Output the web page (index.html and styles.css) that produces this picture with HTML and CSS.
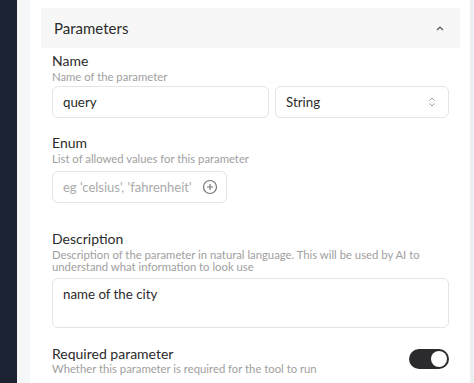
FILE: index.html
```html
<!DOCTYPE html>
<html lang="en">
<head>
  <meta charset="UTF-8">
  <title>Tool parameters</title>
  <link rel="stylesheet" href="styles.css">
</head>
<body>
  <div class="layout">
    <aside class="sidebar"></aside>
    <div class="gutter"></div>
    <main class="panel">
      <section class="params">
        <div class="params-head">
          <span class="params-title">Parameters</span>
          <svg class="chev" width="8" height="5" viewBox="0 0 8 5"><path d="M1 4 L4 1 L7 4" fill="none" stroke="#555" stroke-width="1.2"/></svg>
        </div>

        <div class="field name-field">
          <div class="label">Name</div>
          <div class="hint">Name of the parameter</div>
          <div class="row">
            <div class="input name-input">query</div>
            <div class="input select">
              <span>String</span>
              <svg width="8" height="12" viewBox="0 0 8 12"><path d="M1.5 4.5 L4 2 L6.5 4.5 M1.5 7.5 L4 10 L6.5 7.5" fill="none" stroke="#999" stroke-width="1"/></svg>
            </div>
          </div>
        </div>

        <div class="field enum-field">
          <div class="label">Enum</div>
          <div class="hint">List of allowed values for this parameter</div>
          <div class="input enum">
            <span class="placeholder">eg 'celsius', 'fahrenheit'</span>
            <svg width="16" height="16" viewBox="0 0 16 16"><circle cx="8" cy="8" r="6.5" fill="none" stroke="#777" stroke-width="1.2"/><path d="M8 5 V11 M5 8 H11" stroke="#777" stroke-width="1.2"/></svg>
          </div>
        </div>

        <div class="field desc">
          <div class="label">Description</div>
          <div class="hint">Description of the parameter in natural language. This will be used by AI to understand what information to look use</div>
          <div class="input textarea">name of the city</div>
        </div>

        <div class="field required">
          <div>
            <div class="label">Required parameter</div>
            <div class="hint">Whether this parameter is required for the tool to run</div>
          </div>
          <div class="toggle"><span class="knob"></span></div>
        </div>
      </section>
    </main>
    <div class="edge"></div>
  </div>
</body>
</html>
```

FILE: styles.css
```css
html, body { margin: 0; padding: 0; height: 100%; }
body { font-family: Lato, "Open Sans", sans-serif; color: #2f2f2f; background: #fff; overflow: hidden; }

.layout { display: flex; height: 383px; }
.sidebar { width: 17px; background: #1c2333; flex-shrink: 0; }
.gutter { width: 13px; background: #f6f7f8; flex-shrink: 0; }
.panel { flex: 1; background: #fff; padding: 8px 10px 0 11px; }
.edge { width: 4px; background: #eceef1; flex-shrink: 0; }

.params-head {
  height: 40px;
  background: #f7f7f7;
  display: flex;
  align-items: center;
  justify-content: space-between;
  padding: 0 16px 0 13px;
}
.params-title { font-size: 15px; color: #2b2b2b; }

.field { padding: 0 11px; }
.label { font-size: 14px; line-height: 18px; color: #2b2b2b; }
.hint { font-size: 11.3px; line-height: 13px; color: #a0a0a0; }

.input {
  border: 1px solid #e4e4e4;
  border-radius: 6px;
  height: 32px;
  box-sizing: border-box;
  display: flex;
  align-items: center;
  padding: 0 10px;
  font-size: 13.3px;
  color: #2b2b2b;
}

.name-field { margin-top: 4px; }
.row { display: flex; gap: 6px; margin-top: 3px; }
.name-input { flex: 0 0 217px; }
.select { flex: 1; justify-content: space-between; padding-right: 12px; }

.enum-field { margin-top: 16px; }
.enum { width: 175px; margin-top: 6px; justify-content: space-between; padding-right: 8px; font-size: 13px; }
.placeholder { color: #aaa; }

.desc { margin-top: 27px; }
.desc .hint { line-height: 12px; margin-top: 1px; }
.textarea { height: 50px; align-items: flex-start; padding-top: 7px; margin-top: 5px; }

.required { display: flex; justify-content: space-between; align-items: flex-start; margin-top: 17px; }
.required .hint { margin-top: -1px; }
.toggle {
  width: 40px; height: 20px; border-radius: 10px;
  background: #2b2b2d; position: relative; margin-top: 4px;
}
.knob {
  position: absolute; right: 2px; top: 2px;
  width: 16px; height: 16px; border-radius: 50%; background: #fff;
}
```
